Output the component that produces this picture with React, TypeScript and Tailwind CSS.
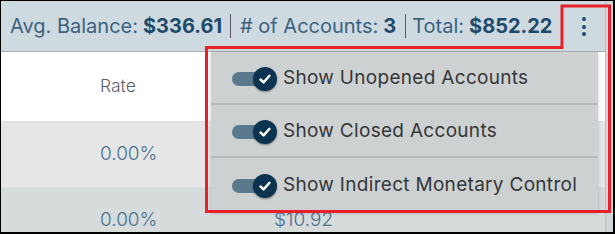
import React from "react";

function Toggle() {
  return (
    <div className="relative w-[46px] h-[24px] flex items-center shrink-0">
      <div className="absolute left-0 top-[5px] w-[36px] h-[14px] rounded-full bg-[#5a798d]" />
      <div className="absolute left-[21px] top-0 w-[24px] h-[24px] rounded-full bg-[#0c3451] shadow-[0_1px_2px_rgba(0,0,0,0.4)] flex items-center justify-center">
        <svg width="14" height="14" viewBox="0 0 14 14">
          <path d="M2.5 7.5 L5.6 10.4 L11.5 3.8" fill="none" stroke="#ffffff" strokeWidth="2.4" strokeLinecap="round" strokeLinejoin="round" />
        </svg>
      </div>
    </div>
  );
}

const items = ["Show Unopened Accounts", "Show Closed Accounts", "Show Indirect Monetary Control"];

export default function App() {
  return (
    <div className="relative w-[615px] h-[234px] overflow-hidden bg-[#d2d6d8] border-t border-l border-r-2 border-b-2 border-black" style={{ fontFamily: "Inter, 'Noto Sans', sans-serif" }}>
      <div className="w-[605px] h-full flex flex-col border-r border-[#b9bdbf]">
        <div className="h-[51px] shrink-0 bg-[#cfd9e0] border-b border-[#a7afb5] flex items-center pl-[9px] text-[20px] text-[#3b6380]">
          <span>Avg. Balance:</span>
          <span className="ml-[5px] font-bold text-[#1e4b6c]">$336.61</span>
          <span className="ml-[8px] mr-[9px] w-px h-[24px] bg-[#5e5470]" />
          <span># of Accounts:</span>
          <span className="ml-[5px] font-bold text-[#1e4b6c]">3</span>
          <span className="ml-[9px] mr-[6px] w-px h-[24px] bg-[#5e5470]" />
          <span>Total:</span>
          <span className="ml-[5px] font-bold text-[#1e4b6c]">$852.22</span>
          <div className="ml-auto mr-[19px] flex flex-col gap-[3.5px] items-center pt-[1px]">
            <span className="w-[4px] h-[4px] rounded-full bg-[#1e4b6c]" />
            <span className="w-[4px] h-[4px] rounded-full bg-[#1e4b6c]" />
            <span className="w-[4px] h-[4px] rounded-full bg-[#1e4b6c]" />
          </div>
        </div>
        <div className="h-[70px] shrink-0 bg-white border-b border-[#dadddf] flex items-center pl-[99px] text-[17.5px] font-light text-[#5a5f70]">
          Rate
        </div>
        <div className="h-[65px] shrink-0 bg-[#e5e7e6] flex items-center pl-[99px] text-[19px] font-light text-[#4c7192]">
          0.00%
        </div>
        <div className="h-[66px] shrink-0 bg-[#d6dbdc] flex items-center pl-[99px] text-[19px] font-light text-[#4c7192]">
          <span className="w-[174px]">0.00%</span>
          <span>$10.92</span>
        </div>
      </div>

      <div className="absolute left-[210px] top-[51px] w-[387px] bg-[#cdd1d2] shadow-[0_2px_4px_rgba(0,0,0,0.2)] flex flex-col">
        {items.map((t, i) => (
          <div key={t} className={"h-[53px] flex items-center pl-[21px] pt-[2px] gap-[5px] " + (i < 2 ? "border-b-2 border-[#b6babc]" : "")}>
            <Toggle />
            <span className="text-[19px] text-[#343638] tracking-[0.3px]">{t}</span>
          </div>
        ))}
      </div>

      <svg className="absolute left-0 top-0 pointer-events-none" width="615" height="234">
        <path d="M561 5 L608.5 5 L608.5 210.5 L205.5 210.5 L205.5 46.5 L561 46.5 Z" fill="none" stroke="#e8202a" strokeWidth="3" />
      </svg>
    </div>
  );
}
